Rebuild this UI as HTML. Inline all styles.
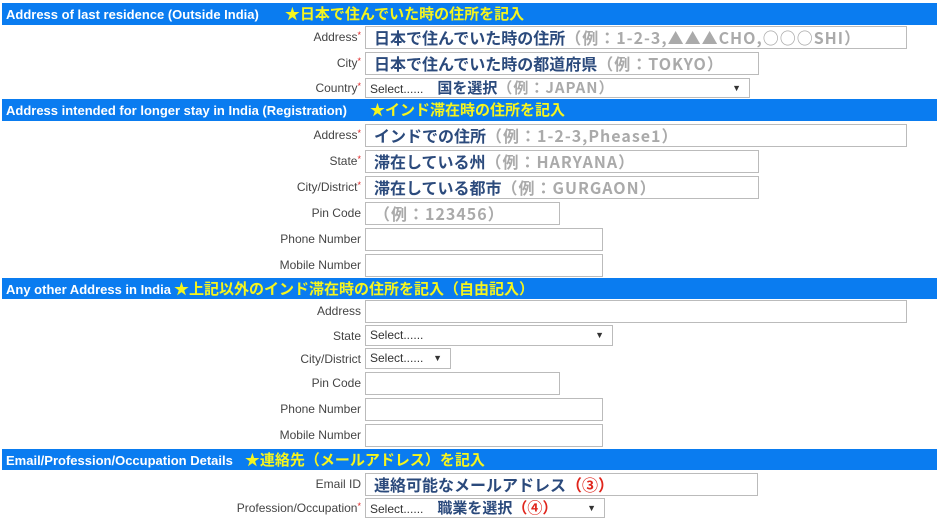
<!DOCTYPE html>
<html><head><meta charset="utf-8"><style>
*{margin:0;padding:0;box-sizing:border-box}
body{width:940px;height:523px;background:#fff;position:relative;overflow:hidden;font-family:"Liberation Sans","Noto Sans CJK JP",sans-serif}
.h{position:absolute;left:2px;width:935px;background:#0a7cf0;color:#fff;font-weight:bold;font-size:13px;padding-left:4px;white-space:nowrap}
.h .j{color:#f5f51e;font-size:15px;font-family:"Noto Sans CJK JP",sans-serif}
.l{position:absolute;right:579px;font-size:12px;color:#444;text-align:right;white-space:nowrap}
.l i{color:#d22;font-style:normal;font-size:9px;vertical-align:top}
.b{position:absolute;left:365px;border:1px solid #bbb;background:#fff;white-space:nowrap;overflow:hidden;padding-left:8px;font-family:"Noto Sans CJK JP",sans-serif;font-weight:bold;font-size:16px;color:#2b4a7c;line-height:20px}
.g{color:#aaa;letter-spacing:1px}
.r{color:#e0241b}
.s{position:absolute;left:365px;border:1px solid #bbb;background:#fff;font-size:12px;color:#333;padding-left:4px;white-space:nowrap}
.s .a{position:absolute;right:8px;top:0;font-size:9px}
.s b{font-family:"Noto Sans CJK JP",sans-serif;color:#2b4a7c;font-size:15px;margin-left:14px}
</style></head><body>

<div class="h" style="top:3px;height:22px;line-height:22px">Address of last residence (Outside India)<span class="j" style="margin-left:26px">★日本で住んでいた時の住所を記入</span></div>
<div class="l" style="top:30px">Address<i>*</i></div>
<div class="b" style="top:26px;width:542px;height:23px">日本で住んでいた時の住所<span class="g">（例：1-2-3,▲▲▲CHO,○○○SHI）</span></div>
<div class="l" style="top:56px">City<i>*</i></div>
<div class="b" style="top:52px;width:394px;height:23px">日本で住んでいた時の都道府県<span class="g">（例：TOKYO）</span></div>
<div class="l" style="top:81px">Country<i>*</i></div>
<div class="s" style="top:78px;width:385px;height:20px;line-height:18px">Select......<b>国を選択<span class="g">（例：JAPAN）</span></b><span class="a">▼</span></div>

<div class="h" style="top:99px;height:22px;line-height:22px">Address intended for longer stay in India (Registration)<span class="j" style="margin-left:23px">★インド滞在時の住所を記入</span></div>
<div class="l" style="top:128px">Address<i>*</i></div>
<div class="b" style="top:124px;width:542px;height:23px">インドでの住所<span class="g">（例：1-2-3,Phease1）</span></div>
<div class="l" style="top:154px">State<i>*</i></div>
<div class="b" style="top:150px;width:394px;height:23px">滞在している州<span class="g">（例：HARYANA）</span></div>
<div class="l" style="top:180px">City/District<i>*</i></div>
<div class="b" style="top:176px;width:394px;height:23px">滞在している都市<span class="g">（例：GURGAON）</span></div>
<div class="l" style="top:206px">Pin Code</div>
<div class="b" style="top:202px;width:195px;height:23px"><span class="g">（例：123456）</span></div>
<div class="l" style="top:232px">Phone Number</div>
<div class="b" style="top:228px;width:238px;height:23px"></div>
<div class="l" style="top:258px">Mobile Number</div>
<div class="b" style="top:254px;width:238px;height:23px"></div>

<div class="h" style="top:278px;height:21px;line-height:21px">Any other Address in India<span class="j" style="margin-left:3px">★上記以外のインド滞在時の住所を記入（自由記入）</span></div>
<div class="l" style="top:304px">Address</div>
<div class="b" style="top:300px;width:542px;height:23px"></div>
<div class="l" style="top:329px">State</div>
<div class="s" style="top:325px;width:248px;height:21px;line-height:19px">Select......<span class="a">▼</span></div>
<div class="l" style="top:352px">City/District</div>
<div class="s" style="top:348px;width:86px;height:21px;line-height:19px">Select......<span class="a">▼</span></div>
<div class="l" style="top:376px">Pin Code</div>
<div class="b" style="top:372px;width:195px;height:23px"></div>
<div class="l" style="top:402px">Phone Number</div>
<div class="b" style="top:398px;width:238px;height:23px"></div>
<div class="l" style="top:428px">Mobile Number</div>
<div class="b" style="top:424px;width:238px;height:23px"></div>

<div class="h" style="top:449px;height:21px;line-height:21px">Email/Profession/Occupation Details<span class="j" style="margin-left:12px">★連絡先（メールアドレス）を記入</span></div>
<div class="l" style="top:477px">Email ID</div>
<div class="b" style="top:473px;width:393px;height:23px">連絡可能なメールアドレス<span class="r">（③）</span></div>
<div class="l" style="top:501px">Profession/Occupation<i>*</i></div>
<div class="s" style="top:498px;width:240px;height:20px;line-height:18px">Select......<b>職業を選択<span class="r">（④）</span></b><span class="a">▼</span></div>

</body></html>
